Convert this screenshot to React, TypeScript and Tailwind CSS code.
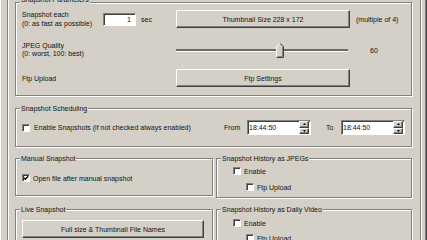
import React from 'react';

const raised =
  'bg-[#d4d0c8] border border-t-white border-l-white border-r-[#404040] border-b-[#404040] shadow-[inset_-1px_-1px_0_#808080]';
const sunken =
  'bg-white border border-t-[#808080] border-l-[#808080] border-r-white border-b-white shadow-[inset_1px_1px_0_#404040]';

function GroupBox({
  title,
  className,
  titleTop = '-top-[5px]',
  children,
}: {
  title: string;
  className: string;
  titleTop?: string;
  children?: React.ReactNode;
}) {
  return (
    <div className={`relative flex flex-col border border-[#808080] shadow-[inset_1px_1px_0_#fff,1px_1px_0_#fff] ${className}`}>
      <span className={`absolute left-[4px] bg-[#d4d0c8] px-px leading-[9px] whitespace-nowrap ${titleTop}`}>{title}</span>
      {children}
    </div>
  );
}

function Button({ children, className }: { children: React.ReactNode; className: string }) {
  return <div className={`flex items-center justify-center whitespace-nowrap ${raised} ${className}`}>{children}</div>;
}

function Check({ checked }: { checked?: boolean }) {
  return (
    <span className={`flex w-[8px] h-[8px] shrink-0 items-center justify-center ${sunken}`}>
      {checked && (
        <svg width="6" height="6" viewBox="0 0 6 6">
          <path d="M0.8 2.6 L2.4 4.3 L5.2 1.2" stroke="#000" strokeWidth="1.3" fill="none" />
        </svg>
      )}
    </span>
  );
}

function CheckRow({ label, checked, className }: { label: string; checked?: boolean; className: string }) {
  return (
    <div className={`flex h-[8px] items-center whitespace-nowrap ${className}`}>
      <Check checked={checked} />
      <span className="ml-[3px]">{label}</span>
    </div>
  );
}

function TimeField({ value }: { value: string }) {
  return (
    <div className={`flex w-[64px] h-[15px] items-center ${sunken}`}>
      <span className="pl-[1px]">{value}</span>
      <div className="ml-auto mr-px flex h-[13px] w-[10px] flex-col">
        <div className={`flex flex-1 items-center justify-center ${raised}`}>
          <svg width="3" height="2" viewBox="0 0 3 2">
            <path d="M1.5 0 L3 2 H0 Z" fill="#000" />
          </svg>
        </div>
        <div className={`flex flex-1 items-center justify-center ${raised}`}>
          <svg width="3" height="2" viewBox="0 0 3 2">
            <path d="M0 0 H3 L1.5 2 Z" fill="#000" />
          </svg>
        </div>
      </div>
    </div>
  );
}

export default function App() {
  return (
    <div className="flex w-[427px] h-[240px] overflow-hidden bg-[#d4d0c8] text-[#111] text-[7px] leading-[9px] font-['Liberation_Sans',Arial,sans-serif]">
      <div className="w-[7px] shrink-0 border-l border-white" />
      <div className="flex w-[414px] h-full shrink-0 flex-col border-l border-r border-[#808080] px-[7px] shadow-[inset_1px_0_0_#fff,1px_0_0_#fff]">
        <GroupBox title="Snapshot Parameters" titleTop="-top-[8px]" className="mt-[2px] h-[94px] w-[397px] shrink-0">
          <div className="mt-[7px] flex h-[18px] items-center pl-[6px]">
            <div className="w-[81px] whitespace-nowrap">
              Snapshot each
              <br />
              (0: as fast as possible)
            </div>
            <div className={`flex w-[33px] h-[13px] items-center justify-end pr-[4px] ${sunken}`}>1</div>
            <div className="w-[40px] pl-[5px]">sec</div>
            <Button className="w-[174px] h-[18px]">Thumbnail Size 228 x 172</Button>
            <div className="pl-[6px] whitespace-nowrap">(multiple of 4)</div>
          </div>
          <div className="mt-[12px] flex h-[20px] items-center pl-[6px]">
            <div className="w-[154px] whitespace-nowrap leading-[8px]">
              JPEG Quality
              <br />
              (0: worst, 100: best)
            </div>
            <div className="relative flex w-[174px] h-full items-center">
              <div className="h-[3px] w-[172px] border-b border-white bg-[#6a6a6a]" />
              <svg className="absolute left-[100px] top-[3px]" width="8" height="15" viewBox="0 0 8 15">
                <path d="M0.5 14.5 V3.5 L4 0.5 L7.5 3.5 V14.5 Z" fill="#d4d0c8" />
                <path d="M0.5 14 V3.5 L4 0.5" stroke="#fff" fill="none" />
                <path d="M4 0.5 L7.5 3.5 V14.5 H0.5" stroke="#404040" fill="none" />
                <path d="M6.5 4 V13.5 H1.5" stroke="#808080" fill="none" />
              </svg>
            </div>
            <div className="pl-[20px]">60</div>
          </div>
          <div className="mt-[9px] flex h-[18px] items-center pl-[6px]">
            <div className="w-[154px]">Ftp Upload</div>
            <Button className="w-[174px] h-full">Ftp Settings</Button>
          </div>
        </GroupBox>

        <GroupBox title="Snapshot Scheduling" className="mt-[12px] h-[39px] w-[397px] shrink-0">
          <div className="mt-[11px] flex h-[15px] items-center pl-[6px] pr-[6px] whitespace-nowrap">
            <Check />
            <span className="ml-[4px]">Enable Snapshots (if not checked always enabled)</span>
            <span className="ml-auto w-[23px]">From</span>
            <TimeField value="18:44:50" />
            <span className="w-[30px] pl-[15px]">To</span>
            <TimeField value="18:44:50" />
          </div>
        </GroupBox>

        <div className="mt-[11px] flex items-start">
          <div className="flex w-[198px] flex-col">
            <GroupBox title="Manual Snapshot" className="h-[38px]">
              <CheckRow label="Open file after manual snapshot" checked className="mt-[14px] h-[10px] pl-[6px]" />
            </GroupBox>
            <GroupBox title="Live Snapshot" className="mt-[13px] h-[40px]">
              <Button className="mt-[10px] ml-[6px] w-[182px] h-[18px]">Full size &amp; Thumbnail File Names</Button>
            </GroupBox>
          </div>
          <div className="ml-[3px] flex w-[196px] flex-col">
            <GroupBox title="Snapshot History as JPEGs" className="h-[40px]">
              <CheckRow label="Enable" className="mt-[8px] pl-[16px]" />
              <CheckRow label="Ftp Upload" className="mt-[8px] pl-[29px]" />
            </GroupBox>
            <GroupBox title="Snapshot History as Daily Video" className="mt-[11px] h-[40px]">
              <CheckRow label="Enable" className="mt-[9px] pl-[16px]" />
              <CheckRow label="Ftp Upload" className="mt-[7px] pl-[29px]" />
            </GroupBox>
          </div>
        </div>
      </div>
      <div className="ml-[4px] w-[2px] shrink-0 border-l border-r border-l-[#808080] border-r-[#404040]" />
    </div>
  );
}
